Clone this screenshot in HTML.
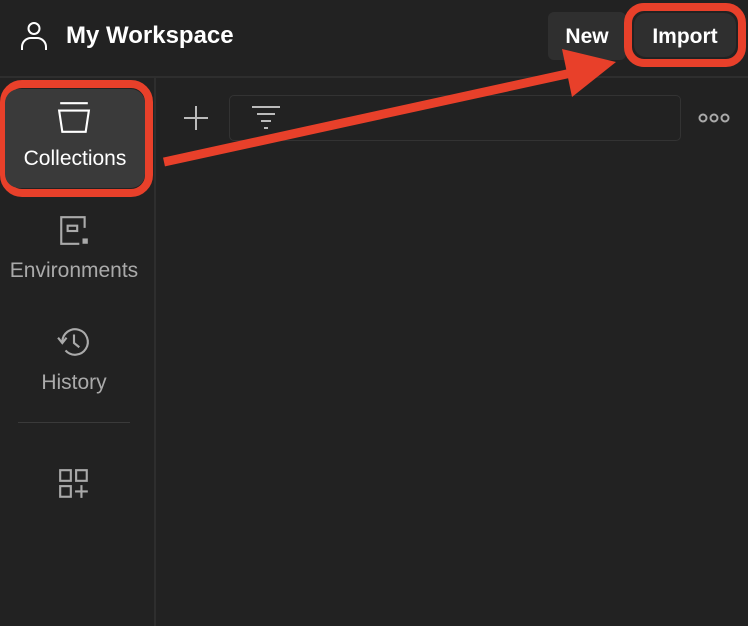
<!DOCTYPE html>
<html><head><style>
body{margin:0;width:748px;height:626px;background:#222222;font-family:"Liberation Sans",sans-serif;overflow:hidden;position:relative}
.a{position:absolute}
</style></head><body>
<div class="a" style="left:0;top:76px;width:748px;height:2px;background:#2e2e2e"></div>
<div class="a" style="left:154px;top:78px;width:2px;height:548px;background:#2e2e2e"></div>
<svg class="a" style="left:18px;top:20px" width="32" height="32" viewBox="0 0 32 32" fill="none" stroke="#fff" stroke-width="2"><circle cx="16" cy="8.5" r="5.5"/><path d="M4 30v-3a9 9 0 0 1 9-9h6a9 9 0 0 1 9 9v3"/></svg>
<div class="a" style="left:66px;top:22px;color:#fff;font-weight:bold;font-size:24px">My Workspace</div>
<div class="a" style="left:548px;top:12px;width:78px;height:48px;background:#2f2f2f;border-radius:6px;color:#fff;font-weight:bold;font-size:21px;line-height:50px;text-align:center">New</div>
<div class="a" style="left:624px;top:3px;width:106px;height:48px;border:8px solid #e8402a;border-radius:20px;"></div>
<div class="a" style="left:634px;top:13px;width:102px;height:44px;background:#2f2f2f;border-radius:12px;color:#fff;font-weight:bold;font-size:21px;line-height:48px;text-align:center">Import</div>
<div class="a" style="left:0;top:80px;width:137px;height:101px;border:8px solid #e8402a;border-radius:22px"></div>
<div class="a" style="left:5px;top:89px;width:140px;height:99px;background:#3a3a3a;border-radius:14px"></div>
<svg class="a" style="left:57px;top:101px" width="34" height="34" viewBox="0 0 32 32" fill="none" stroke="#fff" stroke-width="2"><path d="M3 2h26M2 9h28l-3 20H5z"/></svg>
<div class="a" style="left:5px;top:147px;width:140px;text-align:center;color:#fff;font-size:21px">Collections</div>
<svg class="a" style="left:57px;top:214px" width="34" height="34" viewBox="0 0 32 32" fill="none" stroke="#aaa" stroke-width="2"><path d="M26 13V3H4v25h17"/><rect x="10" y="11" width="9" height="5"/><rect x="24" y="23" width="5" height="5" fill="#aaa" stroke="none"/></svg>
<div class="a" style="left:0;top:259px;width:148px;text-align:center;color:#aaa;font-size:21px">Environments</div>
<svg class="a" style="left:57px;top:326px" width="34" height="34" viewBox="0 0 32 32" fill="none" stroke="#aaa" stroke-width="2"><path d="M5 15a12 12 0 1 1 3 8"/><path d="M1 11l4 5 4-5M16 8v8l5 4"/></svg>
<div class="a" style="left:0;top:371px;width:148px;text-align:center;color:#aaa;font-size:21px">History</div>
<div class="a" style="left:18px;top:422px;width:112px;height:1px;background:#3a3a3a"></div>
<svg class="a" style="left:57px;top:467px" width="34" height="34" viewBox="0 0 32 32" fill="none" stroke="#aaa" stroke-width="2"><rect x="3" y="3" width="10" height="10"/><rect x="18" y="3" width="10" height="10"/><rect x="3" y="18" width="10" height="10"/><path d="M23 17v12M17 23h12"/></svg>
<svg class="a" style="left:182px;top:104px" width="28" height="28" viewBox="0 0 28 28" stroke="#bbb" stroke-width="2"><path d="M14 2v24M2 14h24"/></svg>
<div class="a" style="left:229px;top:95px;width:450px;height:44px;border:1px solid #333;border-radius:5px"></div>
<svg class="a" style="left:250px;top:104px" width="32" height="28" viewBox="0 0 32 28" stroke="#bbb" stroke-width="2"><path d="M2 3h28M7 10h18M11 17h10M14 24h4"/></svg>
<svg class="a" style="left:698px;top:110px" width="32" height="16" viewBox="0 0 32 16" fill="none" stroke="#aaa" stroke-width="2"><circle cx="5" cy="8" r="3.5"/><circle cx="16" cy="8" r="3.5"/><circle cx="27" cy="8" r="3.5"/></svg>
<svg class="a" style="left:0;top:0" width="748" height="626"><path d="M164 162L585 70" stroke="#e8402a" stroke-width="9"/><polygon points="562,49 616,62 572,97" fill="#e8402a"/></svg>
</body></html>
